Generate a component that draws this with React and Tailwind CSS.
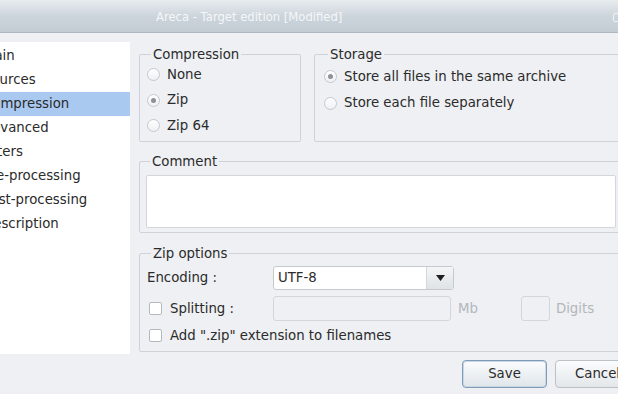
import { useState } from 'react'

const sections = ['Main', 'Sources', 'Compression', 'Advanced', 'Filters', 'Pre-processing', 'Post-processing', 'Description']

function Radio({ checked, label }) {
  return (
    <div className="flex items-center gap-[7px]">
      <span className="flex h-[13px] w-[13px] items-center justify-center rounded-full border border-[#c4c8cc] bg-gradient-to-b from-white to-[#eef0f2]">
        {checked && <span className="h-[5px] w-[5px] rounded-full bg-[#8d9299]" />}
      </span>
      <span>{label}</span>
    </div>
  )
}

function Check({ label }) {
  return (
    <div className="flex items-center gap-[8px]">
      <span className="h-[13px] w-[13px] rounded-[2px] border border-[#b5b9be] bg-white" />
      <span>{label}</span>
    </div>
  )
}

function Group({ title, className, children }) {
  return (
    <fieldset className={`rounded-[2px] border border-[#cfd3d8] ${className}`}>
      <legend className="ml-[4px] px-[2px] leading-[15px]">{title}</legend>
      {children}
    </fieldset>
  )
}

export default function App() {
  const [current] = useState('Compression')

  return (
    <div
      className="h-[394px] w-[618px] overflow-hidden bg-[#eef0f3] text-[13.3px] text-[#2b2b2b]"
      style={{ fontFamily: '"DejaVu Sans", sans-serif' }}
    >
      <div className="relative flex h-[33px] items-center border-b border-[#aeb8c1] bg-gradient-to-b from-[#e8ecef] via-[#cdd5dc] to-[#c3ccd4] pl-[156px] pt-[4px]">
        <span className="text-[11.6px] text-[#f5f7f9]">Areca - Target edition [Modified]</span>
        <span className="absolute right-[-4px] top-[13px] h-[9px] w-[9px] rounded-[2px] border border-[#f0f3f5]" />
      </div>

      <div className="flex gap-[9px] pt-[9px]">
        <div className="h-[312px] w-[130px] shrink-0 overflow-hidden bg-white pt-[2px]">
          {sections.map(s => (
            <div
              key={s}
              className={`flex h-[24px] items-center whitespace-nowrap ${s === current ? 'bg-[#aac9f1]' : ''}`}
            >
              <span className="ml-[-17px]">{s}</span>
            </div>
          ))}
        </div>

        <div className="w-[485px] shrink-0 pt-[5px]">
          <div className="flex gap-[13px]">
            <Group title="Compression" className="w-[162px] shrink-0 px-[7px] pb-[3px]">
              <div className="flex h-[25px] items-center">
                <Radio label="None" />
              </div>
              <div className="flex h-[26px] items-center">
                <Radio checked label="Zip" />
              </div>
              <div className="flex h-[25px] items-center">
                <Radio label="Zip 64" />
              </div>
            </Group>
            <Group title="Storage" className="flex-1 px-[9px]">
              <div className="flex h-[27px] items-center pt-[2px]">
                <Radio checked label="Store all files in the same archive" />
              </div>
              <div className="flex h-[28px] items-center">
                <Radio label="Store each file separately" />
              </div>
            </Group>
          </div>

          <Group title="Comment" className="mt-[12px] px-[6px] pb-[4px] pt-[6px]">
            <div className="h-[53px] w-[470px] rounded-[2px] border border-[#d3d7db] bg-white" />
          </Group>

          <Group title="Zip options" className="mt-[13px] px-[7px] pb-[1px] pt-[5px]">
            <div className="flex h-[24px] items-center">
              <span className="w-[126px]">Encoding :</span>
              <div className="flex h-[24px] w-[181px] rounded-[3px] border border-[#c5c9cd] bg-white">
                <span className="flex flex-1 items-center pl-[4px]">UTF-8</span>
                <span className="flex w-[27px] items-center justify-center border-l border-[#d3d7db] bg-gradient-to-b from-[#f4f5f6] to-[#dfe3e6]">
                  <svg width="9" height="6" viewBox="0 0 9 6">
                    <path d="M0 0h9L4.5 6z" fill="#1e1e1e" />
                  </svg>
                </span>
              </div>
            </div>
            <div className="mt-[6px] flex h-[25px] items-center">
              <div className="w-[126px] pl-[2px]">
                <Check label="Splitting :" />
              </div>
              <div className="h-[25px] w-[178px] rounded-[3px] border border-[#d3d7db] bg-[#eef0f3]" />
              <span className="ml-[7px] text-[#b3b7bc]">Mb</span>
              <div className="ml-[43px] h-[25px] w-[29px] rounded-[3px] border border-[#d3d7db]" />
              <span className="ml-[6px] text-[#b3b7bc]">Digits</span>
            </div>
            <div className="flex h-[29px] items-center pl-[2px]">
              <Check label='Add ".zip" extension to filenames' />
            </div>
          </Group>

          <div className="mr-[-16px] mt-[8px] flex justify-end gap-[8px]">
            <button className="h-[28px] w-[85px] rounded-[4px] border border-[#7f9bb6] bg-gradient-to-b from-[#fbfcfd] to-[#dfe5ea] shadow-[inset_0_0_0_1px_#c9d8e6]">
              Save
            </button>
            <button className="h-[28px] w-[85px] rounded-[4px] border border-[#bcc1c6] bg-gradient-to-b from-[#fbfcfd] to-[#e3e7ea]">
              Cancel
            </button>
          </div>
        </div>
      </div>
    </div>
  )
}
